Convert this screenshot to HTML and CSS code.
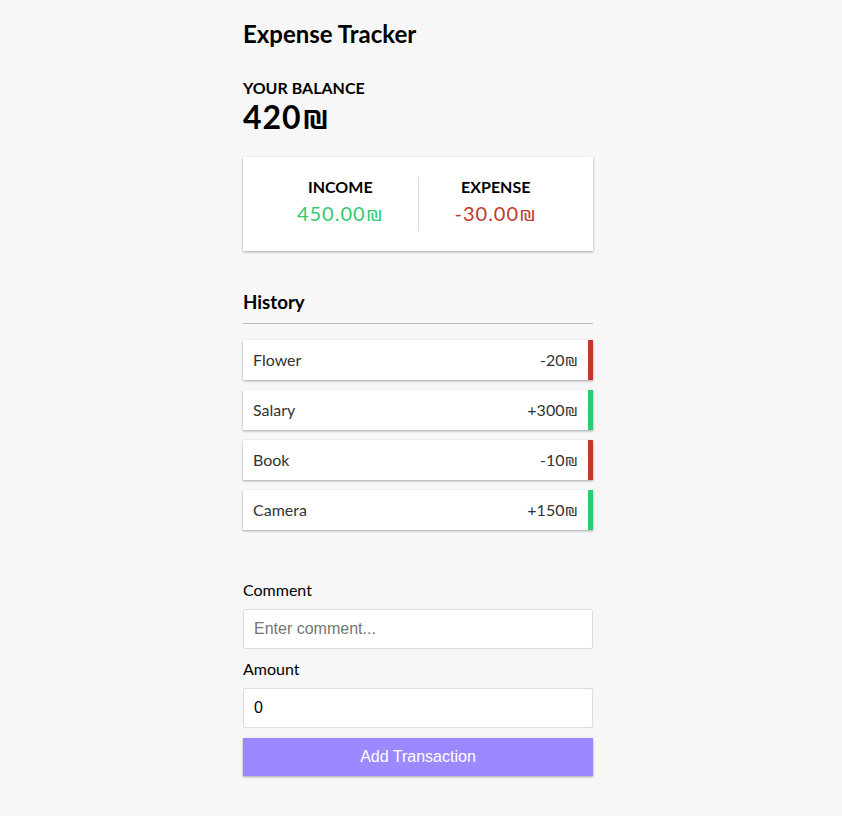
FILE: index.html
```html
<!DOCTYPE html>
<html lang="en">
<head>
<meta charset="UTF-8">
<title>Expense Tracker</title>
<link rel="stylesheet" href="styles.css">
</head>
<body>
<div class="container">
  <h2 class="title">Expense Tracker</h2>
  <h4>Your Balance</h4>
  <h1 class="balance">420₪</h1>
  <div class="inc-exp-container">
    <div>
      <h4>Income</h4>
      <p class="money plus">450.00₪</p>
    </div>
    <div>
      <h4>Expense</h4>
      <p class="money minus">-30.00₪</p>
    </div>
  </div>
  <h3>History</h3>
  <ul class="list">
    <li class="minus"><span>Flower</span><span>-20₪</span></li>
    <li class="plus"><span>Salary</span><span>+300₪</span></li>
    <li class="minus"><span>Book</span><span>-10₪</span></li>
    <li class="plus"><span>Camera</span><span>+150₪</span></li>
  </ul>
  <form class="form">
    <div class="form-control">
      <label for="text">Comment</label>
      <input type="text" id="text" placeholder="Enter comment...">
    </div>
    <div class="form-control">
      <label for="amount">Amount</label>
      <input type="number" id="amount" value="0">
    </div>
    <button class="btn" type="button">Add Transaction</button>
  </form>
</div>
</body>
</html>
```

FILE: styles.css
```css
* { box-sizing: border-box; }
body {
  background-color: #f7f7f7;
  margin: 0;
  font-family: Lato, "Noto Sans", sans-serif;
  display: flex;
  justify-content: center;
  padding-right: 6px;
}
.container {
  width: 350px;
  margin: 0 0 30px;
  padding-top: 19px;
}
.title {
  font-size: 24px;
  margin: 0 0 30px;
}
h1 {
  margin: 0;
  font-size: 32px;
  line-height: 40px;
  letter-spacing: 1px;
}
h3 {
  border-bottom: 1px solid #bbb;
  padding-bottom: 10px;
  margin: 40px 0 10px;
  font-size: 18.72px;
}
h4 {
  margin: 0;
  text-transform: uppercase;
  font-size: 16px;
}
.inc-exp-container {
  background-color: #fff;
  box-shadow: 0 1px 3px rgba(0,0,0,0.12), 0 1px 2px rgba(0,0,0,0.24);
  padding: 20px;
  display: flex;
  justify-content: space-between;
  margin: 20px 0;
}
.inc-exp-container > div {
  flex: 1;
  text-align: center;
}
.inc-exp-container > div:first-of-type {
  border-right: 1px solid #dedede;
}
.money {
  font-size: 20px;
  line-height: 25px;
  letter-spacing: 1px;
  margin: 5px 0;
}
.money.plus { color: #2ecc71; }
.money.minus { color: #c0392b; }
.list {
  list-style-type: none;
  padding: 0;
  margin: 16px 0 40px;
}
.list li {
  background-color: #fff;
  box-shadow: 0 1px 3px rgba(0,0,0,0.12), 0 1px 2px rgba(0,0,0,0.24);
  color: #333;
  display: flex;
  justify-content: space-between;
  padding: 10px;
  margin: 10px 0;
  line-height: 20px;
}
.list li.plus { border-right: 5px solid #2ecc71; }
.list li.minus { border-right: 5px solid #c0392b; }
.form { margin: 0; }
label {
  display: inline-block;
  margin: 10px 0;
}
input[type="text"], input[type="number"] {
  border: 1px solid #dedede;
  border-radius: 2px;
  display: block;
  font-family: "Liberation Sans", Arial, sans-serif;
  font-size: 16px;
  padding: 10px;
  width: 100%;
  background: #fff;
}
input::placeholder { color: #757575; }
.btn {
  cursor: pointer;
  background-color: #9c88ff;
  box-shadow: 0 1px 3px rgba(0,0,0,0.12), 0 1px 2px rgba(0,0,0,0.24);
  color: #fff;
  border: 0;
  display: block;
  font-family: "Liberation Sans", Arial, sans-serif;
  font-size: 16px;
  margin: 10px 0 30px;
  padding: 10px;
  width: 100%;
}
```
